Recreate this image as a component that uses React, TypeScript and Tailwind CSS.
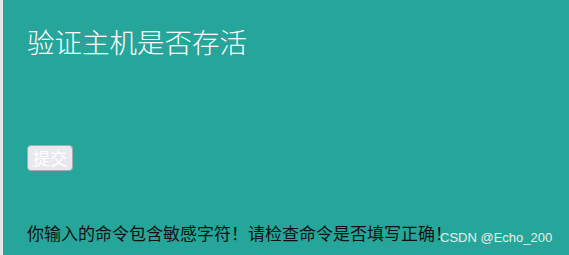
export default function App() {
  return (
    <div className="relative flex h-[255px] w-[569px] overflow-hidden bg-[#26a69a] font-['Microsoft_YaHei','Noto_Sans_CJK_SC',sans-serif]">
      <div className="w-[3px] shrink-0 bg-[#e6e6e6]" />
      <div className="flex flex-1 flex-col pl-[24px]">
        <h1 className="mt-[23px] text-[27.5px] leading-[36px] font-light text-white">验证主机是否存活</h1>
        <div className="mt-[86px] flex">
          <button className="h-[26px] rounded-[4px] border border-[#a9a9b4] bg-[#e9e8ee] px-[5px] text-[17px] leading-[22px] text-white">
            提交
          </button>
        </div>
        <p className="mt-[50px] text-[17px] leading-[24px] text-[#111]">
          你输入的命令包含敏感字符！请检查命令是否填写正确！
        </p>
      </div>
      <span className="absolute left-[440px] top-[228px] text-[13px] text-[#e6eeee] font-['Liberation_Sans',sans-serif]">
        CSDN @Echo_200
      </span>
    </div>
  );
}
